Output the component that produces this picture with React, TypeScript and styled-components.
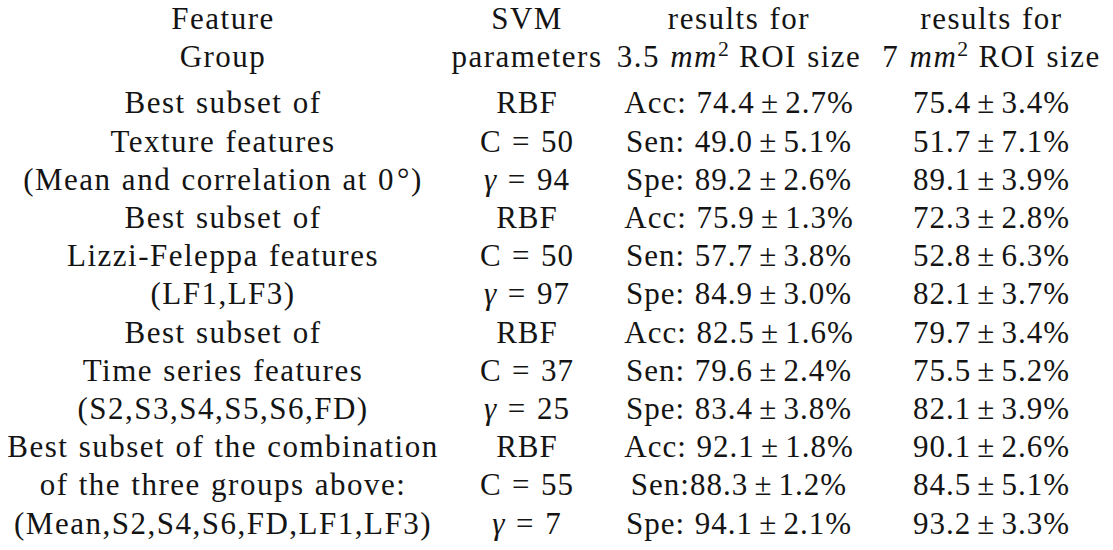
import React from "react";
import styled, { createGlobalStyle } from "styled-components";

const Global = createGlobalStyle`
  html, body { margin: 0; padding: 0; background: #ffffff; }
`;

const Table = styled.div`
  display: grid;
  grid-template-columns: 446px 162px 262px 243px;
  width: 1113px;
  color: #141414;
  font-family: "Liberation Serif", serif;
  font-size: 31px;
  line-height: 38.2px;
  letter-spacing: 1px;
  word-spacing: 1px;
`;

const Cell = styled.div<{ $head?: boolean; $wide?: boolean }>`
  display: flex;
  flex-direction: column;
  align-items: center;
  padding-bottom: ${(p) => (p.$head ? "8px" : "0")};
  letter-spacing: ${(p) => (p.$wide ? "1.5px" : "1px")};
`;

const Line = styled.div`
  white-space: nowrap;
  display: flex;
  justify-content: center;
  width: 100%;
`;

const M = styled.i`
  font-style: italic;
`;

const Sup = styled.sup`
  font-size: 0.7em;
  line-height: 0;
  vertical-align: 0.5em;
  letter-spacing: 0;
`;

const Deg = styled.span`
  margin-left: 2px;
`;

const Pm = styled.span`
  margin: 0 0.2em;
`;

const Eq = styled.span`
  margin: 0 0.34em;
`;

type Group = {
  name: React.ReactNode[];
  svm: React.ReactNode[];
  r35: React.ReactNode[];
  r7: React.ReactNode[];
};

const pm = (a: string, b: string) => (
  <>
    {a}
    <Pm>±</Pm>
    {b}%
  </>
);

const gamma = (v: string) => (
  <>
    <M>γ</M>
    <Eq>=</Eq>
    {v}
  </>
);
const cEq = (v: string) => (
  <>
    C<Eq>=</Eq>
    {v}
  </>
);

const groups: Group[] = [
  {
    name: [
      "Best subset of",
      "Texture features",
      <>
        (Mean and correlation at 0<Deg>°</Deg>)
      </>,
    ],
    svm: ["RBF", cEq("50"), gamma("94")],
    r35: [
      <>Acc: {pm("74.4", "2.7")}</>,
      <>Sen: {pm("49.0", "5.1")}</>,
      <>Spe: {pm("89.2", "2.6")}</>,
    ],
    r7: [pm("75.4", "3.4"), pm("51.7", "7.1"), pm("89.1", "3.9")],
  },
  {
    name: ["Best subset of", "Lizzi-Feleppa features", "(LF1,LF3)"],
    svm: ["RBF", cEq("50"), gamma("97")],
    r35: [
      <>Acc: {pm("75.9", "1.3")}</>,
      <>Sen: {pm("57.7", "3.8")}</>,
      <>Spe: {pm("84.9", "3.0")}</>,
    ],
    r7: [pm("72.3", "2.8"), pm("52.8", "6.3"), pm("82.1", "3.7")],
  },
  {
    name: ["Best subset of", "Time series features", "(S2,S3,S4,S5,S6,FD)"],
    svm: ["RBF", cEq("37"), gamma("25")],
    r35: [
      <>Acc: {pm("82.5", "1.6")}</>,
      <>Sen: {pm("79.6", "2.4")}</>,
      <>Spe: {pm("83.4", "3.8")}</>,
    ],
    r7: [pm("79.7", "3.4"), pm("75.5", "5.2"), pm("82.1", "3.9")],
  },
  {
    name: [
      "Best subset of the combination",
      "of the three groups above:",
      "(Mean,S2,S4,S6,FD,LF1,LF3)",
    ],
    svm: ["RBF", cEq("55"), gamma("7")],
    r35: [
      <>Acc: {pm("92.1", "1.8")}</>,
      <>Sen:{pm("88.3", "1.2")}</>,
      <>Spe: {pm("94.1", "2.1")}</>,
    ],
    r7: [pm("90.1", "2.6"), pm("84.5", "5.1"), pm("93.2", "3.3")],
  },
];

const Lines: React.FC<{
  items: React.ReactNode[];
  head?: boolean;
  wide?: boolean;
}> = ({ items, head, wide }) => (
  <Cell $head={head} $wide={wide}>
    {items.map((it, i) => (
      <Line key={i}>
        <span>{it}</span>
      </Line>
    ))}
  </Cell>
);

export default function App() {
  return (
    <>
      <Global />
      <Table>
        <Lines head wide items={["Feature", "Group"]} />
        <Lines head wide items={["SVM", "parameters"]} />
        <Lines
          head
          wide
          items={[
            "results for",
            <>
              3.5 <M>mm</M>
              <Sup>2</Sup> ROI size
            </>,
          ]}
        />
        <Lines
          head
          wide
          items={[
            "results for",
            <>
              7 <M>mm</M>
              <Sup>2</Sup> ROI size
            </>,
          ]}
        />
        {groups.map((g, i) => (
          <React.Fragment key={i}>
            <Lines wide items={g.name} />
            <Lines items={g.svm} />
            <Lines items={g.r35} />
            <Lines items={g.r7} />
          </React.Fragment>
        ))}
      </Table>
    </>
  );
}
